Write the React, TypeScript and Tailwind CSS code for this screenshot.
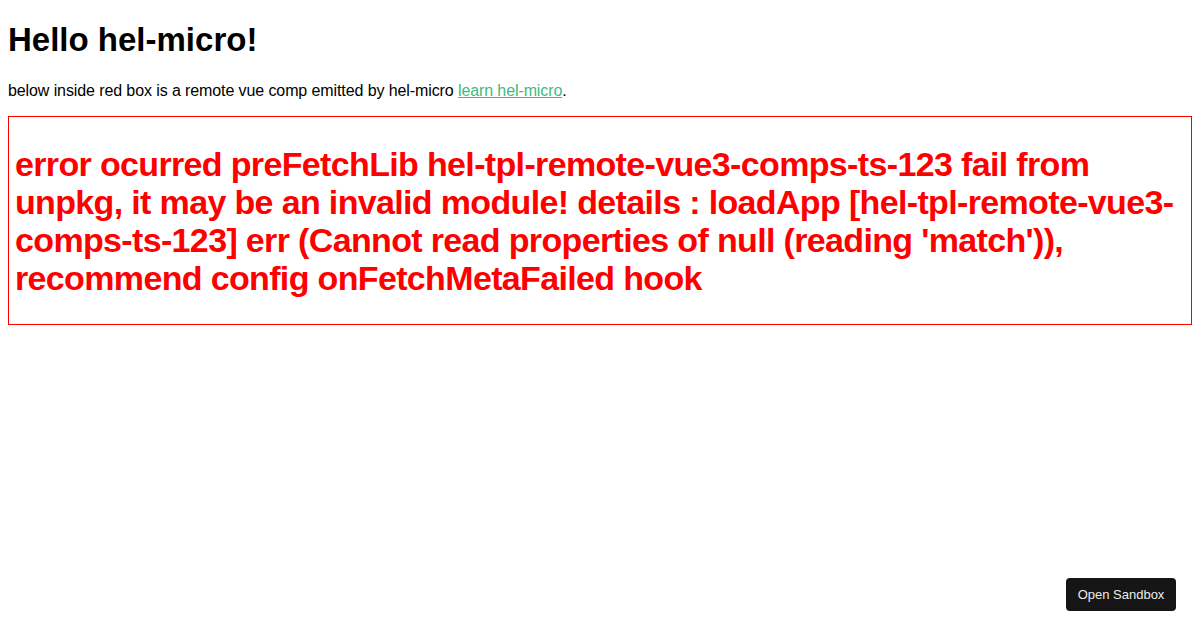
export default function App() {
  return (
    <div className="min-h-[630px] bg-white px-2 font-['Liberation_Sans',Arial,sans-serif] text-black">
      <h1 className="pt-[21px] text-[33px] font-bold leading-[37px]">Hello hel-micro!</h1>
      <p className="mt-[24px] text-base leading-[18px] tracking-[-0.1px]">
        below inside red box is a remote vue comp emitted by hel-micro{' '}
        <a href="#" className="text-[#42b983] underline">
          learn hel-micro
        </a>
        .
      </p>
      <div className="mt-[16px] border border-[#ff0000] px-[6px] pt-[28px] pb-[27px]">
        <h2 className="text-[34px] font-bold leading-[38px] tracking-[-0.65px] text-[#ff0000]">
          error ocurred preFetchLib hel-tpl-remote-vue3-comps-ts-123 fail from unpkg, it may be an invalid
          module! details : loadApp [hel-tpl-remote-vue3-comps-ts-123] err (Cannot read properties of null
          (reading 'match')), recommend config onFetchMetaFailed hook
        </h2>
      </div>
      <button className="fixed right-6 bottom-[19px] h-[33px] w-[110px] rounded-[4px] bg-[#151515] text-[13px] text-[#ececec]">
        Open Sandbox
      </button>
    </div>
  );
}
